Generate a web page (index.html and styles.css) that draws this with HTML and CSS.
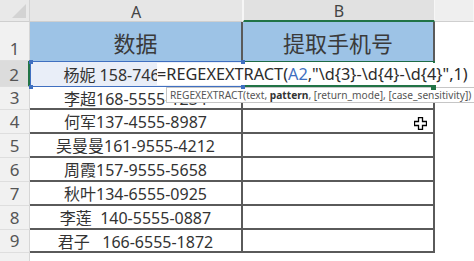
FILE: index.html
```html
<!DOCTYPE html>
<html lang="zh">
<head>
<meta charset="utf-8">
<link rel="stylesheet" href="styles.css">
</head>
<body>
<div class="sheet">
  <div class="corner"><span class="tri"></span></div>
  <div class="colhead">A</div>
  <div class="colhead sel">B</div>
  <div class="colhead rest"></div>

  <div class="rowhead r1">1</div>
  <div class="cell title">数据</div>
  <div class="cell title">提取手机号</div>
  <div class="blank"></div>

  <div class="rowhead r2 sel">2</div>
  <div class="cell ref">杨妮 158-7465-8888</div>
  <div class="cell active"></div>
  <div class="blank"></div>

  <div class="rowhead r3">3</div>
  <div class="cell">李超168-5555-1234</div>
  <div class="cell"></div>
  <div class="blank"></div>

  <div class="rowhead">4</div>
  <div class="cell">何军137-4555-8987</div>
  <div class="cell"></div>
  <div class="blank"></div>

  <div class="rowhead">5</div>
  <div class="cell">吴曼曼161-9555-4212</div>
  <div class="cell"></div>
  <div class="blank"></div>

  <div class="rowhead">6</div>
  <div class="cell">周霞157-9555-5658</div>
  <div class="cell"></div>
  <div class="blank"></div>

  <div class="rowhead">7</div>
  <div class="cell">秋叶134-6555-0925</div>
  <div class="cell"></div>
  <div class="blank"></div>

  <div class="rowhead">8</div>
  <div class="cell">李莲&nbsp; 140-5555-0887</div>
  <div class="cell"></div>
  <div class="blank"></div>

  <div class="rowhead r9">9</div>
  <div class="cell">君子&nbsp;&nbsp; 166-6555-1872</div>
  <div class="cell"></div>
  <div class="blank"></div>

  <div class="rowhead last"></div>
  <div class="blank"></div>
  <div class="blank"></div>
  <div class="blank"></div>

  <div class="edit">=REGEXEXTRACT(<span class="refc">A2</span>,"\d{3}-\d{4}-\d{4}",1)</div>
  <div class="tip">REGEXEXTRACT(text, <b>pattern</b>, [return_mode], [case_sensitivity])</div>
  <span class="h h1"></span><span class="h h2"></span><span class="h h3"></span><span class="h h4"></span><span class="h h5"></span>
  <svg class="cursor" width="13" height="13" viewBox="0 0 13 13"><path d="M4.5 0.5h4v4h4v4h-4v4h-4v-4h-4v-4h4z" fill="#fff" stroke="#000" stroke-width="1.3"/></svg>
</div>
</body>
</html>
```
FILE: styles.css
```css
* { box-sizing: border-box; }
html, body { margin: 0; padding: 0; background: #fff; }
body { width: 474px; height: 261px; overflow: hidden; font-family: "Noto Sans", "Noto Sans CJK SC", sans-serif; }
.sheet {
  position: relative;
  display: grid;
  grid-template-columns: 30px 213px 192px 1fr;
  grid-template-rows: 22px 39px 26px 23px 24px 24px 24px 24px 24px 23px 1fr;
  width: 474px;
  height: 261px;
}
.corner { background: #e9e9e9; border-right: 1px solid #d4d4d4; border-bottom: 1px solid #cfcfcf; position: relative; }
.tri { position: absolute; right: 3px; bottom: 3px; width: 0; height: 0; border-left: 14px solid transparent; border-bottom: 14px solid #d3d3d3; }
.colhead { background: #e6e6e6; color: #444; font-size: 16px; display: flex; align-items: center; justify-content: center; border-right: 1px solid #f6f6f6; border-bottom: 1px solid #cfcfcf; padding-top: 2px; }
.colhead.sel { background: #e1e1e1; border-bottom: 2px solid #217346; border-left: 1px solid #f6f6f6; }
.colhead.rest { background: #efefef; }
.rowhead { background: #f1f1f1; color: #555; font-size: 17px; display: flex; align-items: flex-end; justify-content: center; padding-bottom: 0; border-bottom: 1px solid #dedede; border-right: 1px solid #d6d6d6; line-height: 22px; }
.rowhead.sel { background: #dcdcdc; border-right: 2px solid #217346; }
.rowhead.last { border-bottom: none; }
.cell { border-right: 2px solid #5a5a5a; border-bottom: 2px solid #5a5a5a; display: flex; align-items: center; justify-content: center; font-size: 16px; color: #333; white-space: nowrap; overflow: hidden; }
.cell.title { background: #9dc3e6; font-size: 22px; color: #3a3a3a; border-bottom: none; }
.cell.ref { background: #e9eef8; border: 1px solid #3f6fc0; border-right: none; }
.cell.active { border: 1px solid #1e6b45; border-bottom: 2px solid #217346; border-right: 2px solid #217346; }
.blank { background: #fff; }
.edit {
  position: absolute; left: 157px; top: 63px; width: 317px; height: 22px;
  background: #fff; font-size: 16.3px; color: #2b2b2b; white-space: nowrap;
  line-height: 22px; overflow: hidden;
}
.refc { color: #3f6fc0; }
.tip {
  position: absolute; left: 166px; top: 87px; width: 310px; height: 16px;
  background: #fff; border: 1px solid #c6c6c6; font-size: 10.2px; color: #555;
  line-height: 14px; padding-left: 3px; white-space: nowrap; overflow: hidden;
}
.tip b { color: #333; }
.h { position: absolute; width: 4px; height: 4px; }
.h1 { left: 29px; top: 60px; background: #3f6fc0; }
.h2 { left: 241px; top: 60px; background: #3f6fc0; }
.h3 { left: 29px; top: 85px; background: #3f6fc0; }
.h4 { left: 241px; top: 85px; background: #3f6fc0; }
.h5 { left: 431px; top: 85px; background: #217346; width: 5px; height: 5px; }
.cursor { position: absolute; left: 414px; top: 117px; }
```
